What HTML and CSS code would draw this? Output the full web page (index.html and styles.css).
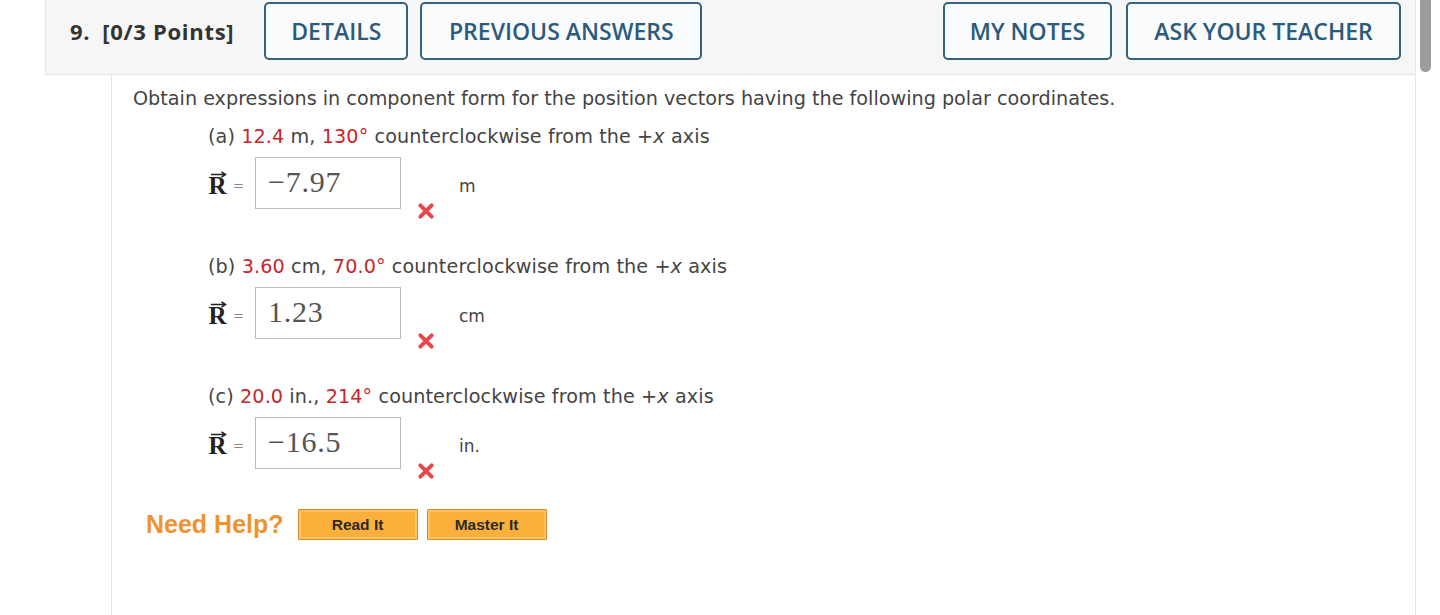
FILE: index.html
```html
<!DOCTYPE html>
<html lang="en">
<head>
<meta charset="utf-8">
<title>Question 9</title>
<link rel="stylesheet" href="styles.css">
</head>
<body>
<div class="page">
  <div class="qhead">
    <div class="qnum"><span class="num">9.</span><span class="pts">[0/3 Points]</span></div>
    <button class="hbtn btn-details">DETAILS</button>
    <button class="hbtn btn-prev">PREVIOUS ANSWERS</button>
    <div class="spacer"></div>
    <button class="hbtn btn-notes">MY NOTES</button>
    <button class="hbtn btn-ask">ASK YOUR TEACHER</button>
  </div>
  <div class="qbody">
    <p class="intro">Obtain expressions in component form for the position vectors having the following polar coordinates.</p>

    <div class="part">
      <p class="plabel">(a) <span class="red">12.4</span> m, <span class="red">130°</span> counterclockwise from the +<i>x</i> axis</p>
      <div class="arow">
        <span class="vec"><svg class="arrow" viewBox="0 0 18 7" width="18" height="7"><path d="M1 3.5H15M11.5 0.8L15.5 3.5L11.5 6.2" fill="none" stroke="#222" stroke-width="1.6"/></svg><span class="vR">R</span></span>
        <span class="eq">=</span>
        <span class="ibox">−7.97</span>
        <svg class="xmark" viewBox="0 0 16 16" width="18" height="18"><path d="M3 3L13 13M13 3L3 13" stroke="#e8474a" stroke-width="3.6" stroke-linecap="round"/></svg>
        <span class="unit">m</span>
      </div>
    </div>

    <div class="part">
      <p class="plabel">(b) <span class="red">3.60</span> cm, <span class="red">70.0°</span> counterclockwise from the +<i>x</i> axis</p>
      <div class="arow">
        <span class="vec"><svg class="arrow" viewBox="0 0 18 7" width="18" height="7"><path d="M1 3.5H15M11.5 0.8L15.5 3.5L11.5 6.2" fill="none" stroke="#222" stroke-width="1.6"/></svg><span class="vR">R</span></span>
        <span class="eq">=</span>
        <span class="ibox">1.23</span>
        <svg class="xmark" viewBox="0 0 16 16" width="18" height="18"><path d="M3 3L13 13M13 3L3 13" stroke="#e8474a" stroke-width="3.6" stroke-linecap="round"/></svg>
        <span class="unit">cm</span>
      </div>
    </div>

    <div class="part">
      <p class="plabel">(c) <span class="red">20.0</span> in., <span class="red">214°</span> counterclockwise from the +<i>x</i> axis</p>
      <div class="arow">
        <span class="vec"><svg class="arrow" viewBox="0 0 18 7" width="18" height="7"><path d="M1 3.5H15M11.5 0.8L15.5 3.5L11.5 6.2" fill="none" stroke="#222" stroke-width="1.6"/></svg><span class="vR">R</span></span>
        <span class="eq">=</span>
        <span class="ibox">−16.5</span>
        <svg class="xmark" viewBox="0 0 16 16" width="18" height="18"><path d="M3 3L13 13M13 3L3 13" stroke="#e8474a" stroke-width="3.6" stroke-linecap="round"/></svg>
        <span class="unit">in.</span>
      </div>
    </div>

    <div class="help">
      <span class="needhelp">Need Help?</span>
      <button class="hlp">Read It</button>
      <button class="hlp">Master It</button>
    </div>
  </div>
</div>
<div class="scroll-thumb"></div>
</body>
</html>
```

FILE: styles.css
```css
html, body {
  margin: 0;
  padding: 0;
  background: #ffffff;
  height: 615px;
  overflow: hidden;
}

.page {
  display: flex;
  flex-direction: column;
  height: 615px;
}

.qhead {
  margin-left: 45px;
  width: 1371px;
  box-sizing: border-box;
  height: 75px;
  background: #f6f6f6;
  border: 1px solid #e6e6e6;
  border-top: none;
  display: flex;
  align-items: flex-start;
  padding: 2px 14px 0 24px;
  font-family: "Open Sans", sans-serif;
}

.qnum {
  display: flex;
  align-items: center;
  height: 57px;
  font-weight: 700;
  font-size: 22px;
  letter-spacing: 0.7px;
  color: #333;
}

.qnum .num {
  margin-right: 12px;
}

.hbtn {
  height: 58px;
  box-sizing: border-box;
  background: #f9fbfc;
  border: 2px solid #36627e;
  border-radius: 5px;
  color: #2b5a7c;
  font-family: "Open Sans", sans-serif;
  font-weight: 600;
  font-size: 23px;
  padding: 0;
  text-align: center;
}

.btn-details { width: 144px; }
.btn-prev { width: 282px; margin-left: 12px; }
.btn-notes { width: 169px; }
.btn-ask { width: 275px; margin-left: 14px; }

.qnum + .btn-details { margin-left: 30px; }

.spacer { flex: 1; }

.qbody {
  flex: 1;
  margin-left: 111px;
  width: 1305px;
  box-sizing: border-box;
  border-left: 1px solid #e4e4e4;
  border-right: 1px solid #e4e4e4;
  padding: 12px 0 0 21px;
  font-family: "DejaVu Sans", Verdana, sans-serif;
  font-size: 19.2px;
  color: #444;
}

.intro {
  margin: 0;
  line-height: 24px;
}

.part {
  margin-left: 75px;
  margin-top: 14px;
}

.part + .part {
  margin-top: 46px;
}

.plabel {
  margin: 0;
  line-height: 24px;
  letter-spacing: 0.1px;
}

.red { color: #c8262a; }

.arow {
  display: flex;
  align-items: center;
  margin-top: 8px;
  height: 52px;
}

.vec {
  position: relative;
  display: inline-flex;
  flex-direction: column;
  align-items: center;
  width: 19px;
  margin-top: 2px;
}

.vec .arrow {
  display: block;
  margin-bottom: -3px;
  margin-left: 2px;
}

.vR {
  font-family: "Liberation Serif", serif;
  font-weight: 700;
  font-size: 25px;
  line-height: 22px;
  color: #222;
}

.eq {
  font-family: "DejaVu Sans", sans-serif;
  font-size: 13px;
  color: #888;
  margin-left: 6px;
  margin-right: 11px;
  margin-top: 4px;
}

.ibox {
  width: 146px;
  height: 52px;
  box-sizing: border-box;
  border: 1px solid #bdbdbd;
  padding: 9px 0 0 12px;
  font-family: "Liberation Serif", serif;
  font-size: 30px;
  letter-spacing: 0.8px;
  line-height: 30px;
  color: #555;
  background: #fff;
}

.xmark {
  align-self: flex-end;
  margin-bottom: -11px;
  margin-left: 16px;
}

.unit {
  margin-left: 24px;
  margin-top: 6px;
  font-size: 17px;
  color: #444;
}

.help {
  display: flex;
  align-items: center;
  margin: 40px 0 0 13px;
}

.needhelp {
  font-family: "Liberation Sans", Arial, sans-serif;
  font-weight: 700;
  font-size: 25px;
  color: #ee9330;
  margin-right: 14px;
}

.hlp {
  width: 120px;
  height: 31px;
  box-sizing: border-box;
  margin-right: 9px;
  background: #fbb03b;
  border: 1px solid #d88a26;
  box-shadow: inset 0 0 0 2px #fdc465;
  border-radius: 1px;
  font-family: "Liberation Sans", Arial, sans-serif;
  font-weight: 700;
  font-size: 15.5px;
  color: #2a2a2a;
  padding: 0;
}

.scroll-thumb {
  position: absolute;
  left: 1420px;
  top: -6px;
  width: 11px;
  height: 78px;
  border-radius: 6px;
  background: #9c9c9c;
}
```
